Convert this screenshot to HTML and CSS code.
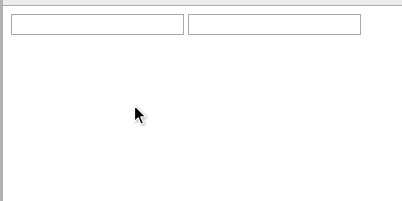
FILE: index.html
```html
<!DOCTYPE html>
<html lang="en">
<head>
    <meta charset="UTF-8">
    <title>Form</title>
    <link rel="stylesheet" href="styles.css">
</head>
<body>
    <div class="frame">
        <div class="topbar"></div>
        <div class="content">
            <div class="fields">
                <input class="field" type="text">
                <input class="field" type="text">
            </div>
        </div>
        <svg class="cursor" width="15" height="22" viewBox="0 0 15 22">
            <path d="M1.5 1.5 L1.5 17.5 L5.2 13.8 L8 20.2 L10.5 19.1 L7.8 12.9 L12.8 12.9 Z" fill="#000" stroke="#fff" stroke-width="1.2" stroke-linejoin="round"/>
        </svg>
    </div>
</body>
</html>
```

FILE: styles.css
```css
html, body {
    margin: 0;
    padding: 0;
    height: 100%;
    background-color: #ffffff;
    font-family: 'Liberation Sans', Arial, sans-serif;
}

.frame {
    position: relative;
    height: 100%;
    border-left: 3px solid #b2b2b2;
    box-sizing: border-box;
}

.topbar {
    height: 5px;
    background-color: #ececec;
    border-bottom: 1px solid #a9a9a9;
}

.content {
    padding: 8px;
}

.fields {
    display: flex;
    gap: 4px;
}

.field {
    width: 173px;
    height: 21px;
    box-sizing: border-box;
    margin: 0;
    padding: 0 3px;
    border: 1px solid #a9a9a9;
    background-color: #ffffff;
    outline: none;
}

.cursor {
    position: absolute;
    left: 130px;
    top: 104px;
    filter: drop-shadow(1px 1px 1px rgba(0, 0, 0, 0.3));
}
```
